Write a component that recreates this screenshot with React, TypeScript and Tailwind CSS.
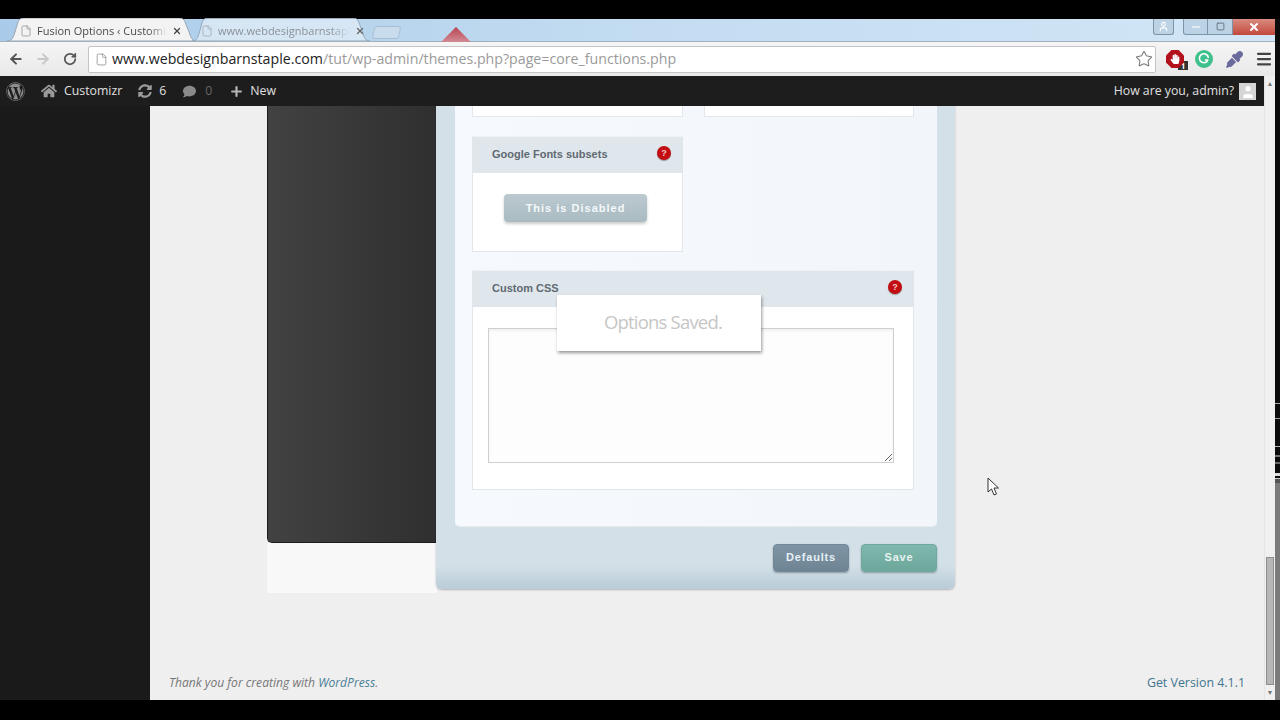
import { ArrowLeft, ArrowRight, RotateCw, Star, File, X, Minus, Plus, User, Menu, Square } from "lucide-react";
import { FaWordpress, FaHome, FaComment, FaSyncAlt, FaEyeDropper, FaHandPaper } from "react-icons/fa";

const URL_HOST = "www.webdesignbarnstaple.com";
const URL_PATH = "/tut/wp-admin/themes.php?page=core_functions.php";

function TabShape({ fill, stroke }: { fill: string; stroke: string }) {
  return (
    <svg className="absolute inset-0 w-full h-full" viewBox="0 0 190 23" preserveAspectRatio="none">
      <path d="M0 23 C5 23 6 20 8 14 L11 4 C12 1 14 0 17 0 L172 0 C175 0 177 1 178 4 L182 14 C184 20 185 23 190 23 Z" fill={fill} stroke={stroke} strokeWidth="1" />
    </svg>
  );
}

function Tab({ title, active, width, pad }: { title: string; active?: boolean; width: string; pad: string }) {
  return (
    <div className={`relative h-[23px] shrink-0 ${width}`}>
      <TabShape fill={active ? "#f3f3f3" : "rgba(225,236,246,0.75)"} stroke={active ? "#9aa7b3" : "#8fa6bb"} />
      <div className={`relative flex items-center h-full pt-[3px] pr-[15px] gap-[5px] ${pad}`}>
        <File size={12} strokeWidth={1.4} className={active ? "text-[#8a8a8a] shrink-0" : "text-[#9aa5ae] shrink-0"} />
        <span className={`flex-1 whitespace-nowrap text-[11px] [mask-image:linear-gradient(to_right,black_86%,transparent)] ${active ? "text-[#4a4a4a]" : "text-[#8a929a]"}`}>{title}</span>
        <X size={10} strokeWidth={3} className={active ? "text-[#444] shrink-0" : "text-[#666] shrink-0"} />
      </div>
    </div>
  );
}

function TabStrip() {
  return (
    <div className="relative h-[23px] flex items-end pl-[7px] bg-gradient-to-r from-[#a9cbe9] via-[#c3dcf1] to-[#d2e6f6] border-b border-[#9fb0bf]">
      <div className="absolute left-[441px] top-[8px] w-[30px] h-[15px] bg-gradient-to-b from-[#b8404e] to-[#d08a94] [clip-path:polygon(50%_0,100%_100%,0_100%)]" />
      <Tab title="Fusion Options ‹ Customi" active width="w-[190px]" pad="pl-[13px]" />
      <div className="-ml-[5px]">
        <Tab title="www.webdesignbarnstapl" width="w-[178px]" pad="pl-[9px]" />
      </div>
      <div className="ml-[3px] mb-[2px] w-[27px] h-[13px] rounded-[3px] border border-[#a9c0d4] bg-[#c8dcee] -skew-x-12" />
      <div className="absolute right-0 top-0 h-[17px] flex items-start">
        <div className="w-[21px] h-[16px] mr-[9px] flex items-center justify-center rounded-b-[3px] border border-t-0 border-[#7d93a8] bg-[#bcd3e6]">
          <User size={11} strokeWidth={2.4} className="text-white" />
        </div>
        <div className="w-[25px] h-[16px] flex items-center justify-center rounded-bl-[3px] border border-t-0 border-[#7d93a8] bg-[#bcd3e6]">
          <Minus size={12} strokeWidth={3} className="text-[#eef4f8]" />
        </div>
        <div className="w-[25px] h-[16px] flex items-center justify-center border-b border-r border-[#7d93a8] bg-[#bcd3e6]">
          <Square size={9} strokeWidth={2.4} className="text-[#607080]" />
        </div>
        <div className="w-[42px] h-[16px] flex items-center justify-center bg-gradient-to-b from-[#d98a80] to-[#c2473c]">
          <X size={12} strokeWidth={4} className="text-white" />
        </div>
      </div>
    </div>
  );
}

function Toolbar() {
  return (
    <div className="h-[34px] flex items-center bg-gradient-to-b from-[#f5f5f5] to-[#e9e9e9] pl-[8px]">
      <ArrowLeft size={16} strokeWidth={3} className="text-[#555] shrink-0" />
      <ArrowRight size={16} strokeWidth={3} className="text-[#c8c8c8] shrink-0 ml-[11px]" />
      <RotateCw size={14} strokeWidth={3} className="text-[#555] shrink-0 ml-[12px]" />
      <div className="ml-[11px] w-[1068px] h-[27px] flex items-center bg-white border border-[#c4c4c4] rounded-[2px] pl-[6px] pr-[2px] shrink-0">
        <File size={13} strokeWidth={1.4} className="text-[#888] shrink-0" />
        <span className="ml-[4px] flex-1 whitespace-nowrap text-[14.2px] text-[#9a9a9a]">
          <span className="text-[#222]">{URL_HOST}</span>
          {URL_PATH}
        </span>
        <Star size={18} strokeWidth={1.4} className="text-[#777] shrink-0" />
      </div>
      <div className="relative ml-[10px] w-[18px] h-[18px] bg-[#b3121d] [clip-path:polygon(30%_0,70%_0,100%_30%,100%_70%,70%_100%,30%_100%,0_70%,0_30%)] flex items-center justify-center shrink-0">
        <FaHandPaper size={10} className="text-white" />
      </div>
      <span className="-ml-[6px] mt-[12px] w-[10px] h-[9px] bg-[#333] text-white text-[8px] leading-[9px] text-center font-bold shrink-0">1</span>
      <svg className="ml-[7px] shrink-0" width="18" height="18" viewBox="0 0 18 18">
        <circle cx="9" cy="9" r="9" fill="#3fc08c" />
        <path d="M12.5 11 A4.5 4.5 0 1 1 13.4 8 M13.4 10 L10 10" fill="none" stroke="#fff" strokeWidth="1.6" />
      </svg>
      <FaEyeDropper size={17} className="ml-[13px] text-[#6b6a9c] shrink-0" />
      <Menu size={18} strokeWidth={3} className="ml-[12px] text-[#444] shrink-0" />
    </div>
  );
}

function AdminBar() {
  return (
    <div className="h-[30px] flex items-center bg-[#1d1d1d] text-[#e0e0e0] text-[12.3px] pl-[6px] pr-[8px]">
      <FaWordpress size={19} className="text-[#8c8c8c]" />
      <FaHome size={16} className="ml-[16px] text-[#9a9a9a]" />
      <span className="ml-[7px]">Customizr</span>
      <FaSyncAlt size={14} className="ml-[16px] text-[#9a9a9a]" />
      <span className="ml-[7px]">6</span>
      <FaComment size={13} className="ml-[17px] text-[#8a8a8a]" />
      <span className="ml-[9px] text-[#666]">0</span>
      <Plus size={15} strokeWidth={3.5} className="ml-[17px] text-[#b5b5b5]" />
      <span className="ml-[6px]">New</span>
      <span className="ml-auto">How are you, admin?</span>
      <div className="ml-[5px] w-[17px] h-[17px] bg-[#d6d6d6] flex items-end justify-center overflow-hidden">
        <User size={16} fill="#fff" strokeWidth={0} />
      </div>
    </div>
  );
}

function HelpDot() {
  return (
    <span className="mb-[4px] w-[14px] h-[14px] rounded-full bg-[#c20d12] shadow-[0_1px_1px_rgba(0,0,0,0.35)] flex items-center justify-center text-[9px] leading-none font-bold text-[#f3c6c6]">
      ?
    </span>
  );
}

function CardHeader({ title }: { title: string }) {
  return (
    <div className="h-[37px] flex items-center justify-between pl-[19px] pr-[11px] bg-[#e0e7ec] border-t border-[#f0f3f6] font-['Liberation_Sans',sans-serif]">
      <span className="mb-[2px] text-[11px] font-bold text-[#5f6a72]">{title}</span>
      <HelpDot />
    </div>
  );
}

function OptionsPanel() {
  return (
    <div className="-ml-[1px] w-[519px] h-[483px] shrink-0 rounded-b-[6px] bg-gradient-to-b from-[#d3e0e8] from-[95%] to-[#b9ccd8] shadow-[0_1px_2px_rgba(0,0,0,0.25)] pl-[19px] pr-[18px] font-['Liberation_Sans',sans-serif]">
      <div className="h-[421px] rounded-b-[5px] bg-gradient-to-r from-[#f6fafe] to-[#f2f5f9] border-b border-[#e6ebef] pl-[17px] pr-[23px]">
        <div className="flex gap-[21px]">
          <div className="w-[211px] h-[11px] bg-white border border-t-0 border-[#e4e8ec]" />
          <div className="w-[210px] h-[11px] bg-white border border-t-0 border-[#e4e8ec]" />
        </div>

        <div className="mt-[19px] w-[211px] h-[116px] bg-white border border-t-0 border-[#e2e6ea]">
          <CardHeader title="Google Fonts subsets" />
          <div className="pt-[21px] pl-[31px]">
            <button className="w-[143px] h-[28px] rounded-[4px] bg-gradient-to-b from-[#bccad0] to-[#a9bac1] shadow-[0_2px_3px_rgba(0,0,0,0.2)] text-[11px] font-bold tracking-[1px] text-[#f4f8fa]">
              This is Disabled
            </button>
          </div>
        </div>

        <div className="relative mt-[18px] w-[442px] h-[220px] bg-white border border-t-0 border-[#e2e6ea]">
          <CardHeader title="Custom CSS" />
          <div className="pt-[21px] pl-[15px]">
            <textarea
              readOnly
              className="block w-[406px] h-[135px] bg-[#fdfdfe] border border-[#cdcfd2] shadow-[inset_0_2px_3px_rgba(0,0,0,0.05)] outline-none"
            />
          </div>
          <div className="absolute left-[84px] top-[25px] w-[204px] h-[56px] bg-white shadow-[1px_2px_3px_rgba(0,0,0,0.4)] flex items-center justify-center pb-[2px] pl-[8px] font-['Open_Sans',sans-serif] text-[18.5px] tracking-[-0.8px] text-[#c6c6c6]">
            Options Saved.
          </div>
        </div>
      </div>

      <div className="flex justify-end gap-[12px] pt-[17px]">
        <button className="w-[76px] h-[28px] pb-[2px] rounded-[4px] bg-gradient-to-b from-[#7f95a5] to-[#6f8493] border border-[#71879a] shadow-[0_1px_2px_rgba(0,0,0,0.3)] text-[11px] font-bold tracking-[0.8px] text-[#e6f0f5]">
          Defaults
        </button>
        <button className="w-[76px] h-[28px] pb-[2px] rounded-[4px] bg-gradient-to-b from-[#80b8ad] to-[#6ca79b] border border-[#6da99d] shadow-[0_1px_2px_rgba(0,0,0,0.3)] text-[11px] font-bold tracking-[0.8px] text-[#e6f3f0]">
          Save
        </button>
      </div>
    </div>
  );
}

function Scrollbar() {
  return (
    <div className="w-[11px] shrink-0 flex flex-col bg-[#f0f0f0] border-l border-[#e4e4e4]">
      <div className="h-[15px] flex items-center justify-center text-[#777] text-[7px] leading-none">▲</div>
      <div className="mt-[466px] mx-[1px] h-[128px] bg-[#b6b6b6] border border-[#8e8e8e]" />
      <div className="mt-auto h-[15px] flex items-center justify-center text-[#777] text-[7px] leading-none">▼</div>
    </div>
  );
}

function EdgeStrip() {
  return (
    <div className="w-[5px] shrink-0 flex flex-col bg-[#0c0c0c]">
      <div className="h-[384px]" />
      <div className="h-px bg-[#aaa]" />
      <div className="h-[14px]" />
      <div className="h-px bg-[#999]" />
      <div className="h-[27px]" />
      <div className="h-px bg-[#bbb]" />
      <div className="h-[8px]" />
      <div className="h-[2px] bg-[#777]" />
      <div className="h-[5px]" />
      <div className="h-[2px] bg-[#666]" />
      <div className="h-[9px]" />
      <div className="h-[3px] bg-[#ddd]" />
      <div className="h-[2px]" />
      <div className="h-px bg-[#ccc]" />
      <div className="h-[4px] bg-[#555]" />
      <div className="flex-1 bg-[#7b7b7b]" />
    </div>
  );
}

export default function App() {
  return (
    <div className="relative w-[1280px] h-[720px] overflow-hidden bg-black flex flex-col font-['Open_Sans',sans-serif]">
      <div className="h-[19px] shrink-0" />
      <div className="h-[681px] flex">
        <div className="w-[1275px] flex flex-col">
          <TabStrip />
          <Toolbar />
          <div className="flex-1 flex min-h-0">
            <div className="flex-1 flex flex-col min-w-0">
              <AdminBar />
              <div className="flex-1 flex min-h-0">
                <div className="w-[150px] shrink-0 bg-[#1a1a1a]" />
                <div className="flex-1 flex flex-col bg-[#efefef] min-w-0">
                  <div className="flex pl-[117px]">
                    <div className="w-[170px] shrink-0">
                      <div className="h-[437px] rounded-bl-[5px] bg-gradient-to-r from-[#424242] to-[#2f2f2f] border-l border-b border-[#1c1c1c]" />
                      <div className="h-[50px] bg-[#f8f8f8]" />
                    </div>
                    <OptionsPanel />
                  </div>
                  <div className="mt-auto flex items-baseline justify-between pl-[19px] pr-[19px] pb-[7px] text-[12.4px]">
                    <span className="italic text-[12.1px] text-[#777]">
                      Thank you for creating with <span className="text-[#4c7f98]">WordPress</span>.
                    </span>
                    <span className="text-[#3f7590]">Get Version 4.1.1</span>
                  </div>
                </div>
              </div>
            </div>
            <Scrollbar />
          </div>
        </div>
        <EdgeStrip />
      </div>

      <svg className="absolute left-[987px] top-[477px]" width="13" height="20" viewBox="0 0 13 20">
        <path d="M1 1 L1 15 L4.5 12 L7 18 L9.5 17 L7 11 L11.5 11 Z" fill="#fff" stroke="#333" strokeWidth="1" />
      </svg>
    </div>
  );
}
